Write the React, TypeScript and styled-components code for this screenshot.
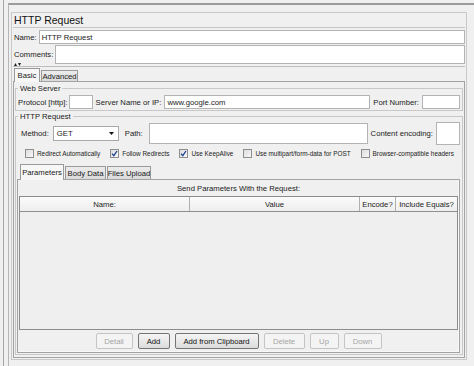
import styled, { createGlobalStyle } from 'styled-components';

const GlobalStyle = createGlobalStyle`
  html, body { margin: 0; padding: 0; background: #f0f0f0; }
  body {
    font-family: 'Liberation Sans', Arial, sans-serif;
    font-size: 7.7px;
    color: #1a1a1a;
  }
  * { box-sizing: border-box; }
`;

const Frame = styled.div`
  display: flex;
  width: 474px;
  height: 366px;
  padding-left: 3px;
  overflow: hidden;
`;

const SideRule = styled.div`
  width: 1px;
  background: #a6a6a6;
  margin-right: 4px;
`;

const Editor = styled.div`
  flex: 1;
  min-width: 0;
  margin-top: 3px;
  border-top: 2px solid #9c9c9c;
  border-left: 1px solid #b6b6b6;
  padding: 7px 7px 0 2px;
`;

const OuterPanel = styled.div`
  display: flex;
  flex-direction: column;
  height: 348px;
  border: 1px solid #c9c9c9;
  padding: 0 1px 1px 1px;
`;

const Title = styled.div`
  height: 15px;
  line-height: 14px;
  font-size: 10.5px;
  padding-left: 1px;
  color: #111;
  border-bottom: 1px solid #c6c6c6;
`;

const FieldRow = styled.div<{ $h: number; $top: number }>`
  display: flex;
  align-items: center;
  height: ${(p) => p.$h}px;
  margin-top: ${(p) => p.$top}px;
  min-width: 0;
`;

const RowLabel = styled.span`
  flex: none;
  white-space: nowrap;
  margin: 0 2px 0 1px;
`;

const TextBox = styled.div<{ $w?: number; $h?: number }>`
  ${(p) => (p.$w ? `width: ${p.$w}px; flex: none;` : 'flex: 1; min-width: 0;')}
  height: ${(p) => p.$h ?? 14}px;
  background: #fff;
  border: 1px solid #b3b3b3;
  padding: 0 2px;
  display: flex;
  align-items: center;
  white-space: nowrap;
  overflow: hidden;
`;

const Splitter = styled.div`
  height: 4px;
  border-bottom: 1px solid #bdbdbd;
  display: flex;
  align-items: flex-start;
  padding-left: 1px;
  margin-top: -1px;
`;

const TabBar = styled.div<{ $left: number; $top: number; $h: number }>`
  display: flex;
  align-items: flex-end;
  height: ${(p) => p.$h}px;
  padding-left: ${(p) => p.$left}px;
  margin-top: ${(p) => p.$top}px;
`;

const Tab = styled.div<{ $active?: boolean; $w: number }>`
  width: ${(p) => p.$w}px;
  height: ${(p) => (p.$active ? 'calc(100% + 1px)' : 'calc(100% - 2px)')};
  border: 1px solid #9a9a9a;
  border-bottom: none;
  background: ${(p) => (p.$active ? '#f7f7f7' : 'linear-gradient(#ececec, #dadada)')};
  display: flex;
  align-items: center;
  justify-content: center;
  white-space: nowrap;
  margin-right: 1px;
  position: relative;
  z-index: ${(p) => (p.$active ? 1 : 0)};
  margin-bottom: ${(p) => (p.$active ? -1 : 0)}px;
`;

const TabBody = styled.div`
  flex: 1;
  display: flex;
  flex-direction: column;
  border: 1px solid #a3a3a3;
  padding: 2px 1px 2px 1px;
`;

const Group = styled.fieldset<{ $grow?: boolean }>`
  margin: 0;
  min-width: 0;
  border: 1px solid #c8c8c8;
  padding: 1px 2px 1px 1px;
  ${(p) => (p.$grow ? 'flex: 1; display: flex; flex-direction: column;' : '')}

  & + & {
    margin-top: 1px;
  }
`;

const Legend = styled.legend`
  font-size: 7.7px;
  line-height: 9px;
  padding: 0 2px;
  margin-left: 1px;
  color: #222;
`;

const InlineLabel = styled.span<{ $gap?: number }>`
  white-space: nowrap;
  flex: none;
  margin: 0 ${(p) => p.$gap ?? 3}px;
`;

const Select = styled.div`
  width: 66px;
  height: 15px;
  flex: none;
  background: #fff;
  border: 1px solid #a9a9a9;
  display: flex;
  align-items: center;
  justify-content: space-between;
  padding: 0 4px 0 3px;
`;

const ChecksRow = styled.div`
  display: flex;
  align-items: center;
  height: 12px;
  margin-top: 2px;
  padding-left: 8px;
  gap: 10px;
`;

const CheckItem = styled.label`
  display: flex;
  align-items: center;
  gap: 3px;
  font-size: 6.4px;
  white-space: nowrap;
  color: #222;
`;

const Box = styled.span`
  width: 9px;
  height: 9px;
  border: 1px solid #8e8e8e;
  background: linear-gradient(135deg, #dcdcdc, #f8f8f8);
  display: flex;
  align-items: center;
  justify-content: center;
`;

const ParamsPanel = styled.div`
  flex: 1;
  display: flex;
  flex-direction: column;
  border: 1px solid #a3a3a3;
  box-shadow: inset -1px -1px 0 #f8f8f8;
  padding: 0 1px 1px 1px;
`;

const Caption = styled.div`
  text-align: center;
  height: 15px;
  line-height: 15px;
  margin-top: 1px;
`;

const Table = styled.div`
  height: 134px;
  display: flex;
  flex-direction: column;
  border: 1px solid #8c8c8c;
  background: #efefef;
`;

const HeaderRow = styled.div`
  display: grid;
  grid-template-columns: 170px 170px 36px 1fr;
  height: 15px;
  border-bottom: 1px solid #8f8f8f;
  background: linear-gradient(#fbfbfb, #eeeeee);
`;

const HeaderCell = styled.div`
  display: flex;
  align-items: center;
  justify-content: center;
  white-space: nowrap;
  border-right: 1px solid #b0b0b0;

  &:last-child {
    border-right: none;
  }
`;

const ButtonRow = styled.div`
  display: flex;
  justify-content: center;
  gap: 5px;
  margin-top: 3px;
`;

const Button = styled.div<{ $w: number; $disabled?: boolean }>`
  width: ${(p) => p.$w}px;
  height: 16px;
  border: 1px solid ${(p) => (p.$disabled ? '#c4c4c4' : '#747474')};
  border-radius: 2px;
  background: ${(p) => (p.$disabled ? '#f4f4f4' : 'linear-gradient(#f5f5f5, #dcdcdc)')};
  color: ${(p) => (p.$disabled ? '#a5a5a5' : '#111')};
  display: flex;
  align-items: center;
  justify-content: center;
  white-space: nowrap;
`;

const Check = () => (
  <svg width="7" height="7" viewBox="0 0 7 7">
    <path d="M1 3.6 L2.8 5.6 L6 1" fill="none" stroke="#1c3f8f" strokeWidth="1.3" />
  </svg>
);

const Arrows = () => (
  <svg width="7" height="4" viewBox="0 0 7 4">
    <path d="M0 3 L1.5 0 L3 3 Z" fill="#222" />
    <path d="M4 0 L7 0 L5.5 3 Z" fill="#222" />
  </svg>
);

const checks = [
  { label: 'Redirect Automatically', on: false },
  { label: 'Follow Redirects', on: true },
  { label: 'Use KeepAlive', on: true },
  { label: 'Use multipart/form-data for POST', on: false },
  { label: 'Browser-compatible headers', on: false },
];

const buttons = [
  { label: 'Detail', w: 37, disabled: true },
  { label: 'Add', w: 32 },
  { label: 'Add from Clipboard', w: 84 },
  { label: 'Delete', w: 41, disabled: true },
  { label: 'Up', w: 29, disabled: true },
  { label: 'Down', w: 38, disabled: true },
];

export default function App() {
  return (
    <>
      <GlobalStyle />
      <Frame>
        <SideRule />
        <Editor>
          <OuterPanel>
            <Title>HTTP Request</Title>
            <FieldRow $h={14} $top={2}>
              <RowLabel>Name:</RowLabel>
              <TextBox>HTTP Request</TextBox>
            </FieldRow>
            <FieldRow $h={19} $top={1}>
              <RowLabel>Comments:</RowLabel>
              <TextBox $h={19} />
            </FieldRow>
            <Splitter>
              <Arrows />
            </Splitter>
            <TabBar $left={1} $top={1} $h={13}>
              <Tab $active $w={26}>Basic</Tab>
              <Tab $w={37}>Advanced</Tab>
            </TabBar>
            <TabBody>
              <Group>
                <Legend>Web Server</Legend>
                <FieldRow $h={14} $top={1}>
                  <InlineLabel $gap={1}>Protocol [http]:</InlineLabel>
                  <TextBox $w={24} />
                  <InlineLabel>Server Name or IP:</InlineLabel>
                  <TextBox>www.google.com</TextBox>
                  <InlineLabel>Port Number:</InlineLabel>
                  <TextBox $w={38} />
                </FieldRow>
              </Group>
              <Group $grow>
                <Legend>HTTP Request</Legend>
                <FieldRow $h={23} $top={0}>
                  <InlineLabel $gap={4}>Method:</InlineLabel>
                  <Select>
                    <span>GET</span>
                    <svg width="5" height="3" viewBox="0 0 5 3">
                      <path d="M0 0 L5 0 L2.5 3 Z" fill="#111" />
                    </svg>
                  </Select>
                  <InlineLabel $gap={6}>Path:</InlineLabel>
                  <TextBox $h={21} />
                  <InlineLabel>Content encoding:</InlineLabel>
                  <TextBox $w={24} $h={23} />
                </FieldRow>
                <ChecksRow>
                  {checks.map((c) => (
                    <CheckItem key={c.label}>
                      <Box>{c.on && <Check />}</Box>
                      {c.label}
                    </CheckItem>
                  ))}
                </ChecksRow>
                <TabBar $left={3} $top={5} $h={15}>
                  <Tab $active $w={44}>Parameters</Tab>
                  <Tab $w={41}>Body Data</Tab>
                  <Tab $w={44}>Files Upload</Tab>
                </TabBar>
                <ParamsPanel>
                  <Caption>Send Parameters With the Request:</Caption>
                  <Table>
                    <HeaderRow>
                      <HeaderCell>Name:</HeaderCell>
                      <HeaderCell>Value</HeaderCell>
                      <HeaderCell>Encode?</HeaderCell>
                      <HeaderCell>Include Equals?</HeaderCell>
                    </HeaderRow>
                  </Table>
                  <ButtonRow>
                    {buttons.map((b) => (
                      <Button key={b.label} $w={b.w} $disabled={b.disabled}>
                        {b.label}
                      </Button>
                    ))}
                  </ButtonRow>
                </ParamsPanel>
              </Group>
            </TabBody>
          </OuterPanel>
        </Editor>
      </Frame>
    </>
  );
}
